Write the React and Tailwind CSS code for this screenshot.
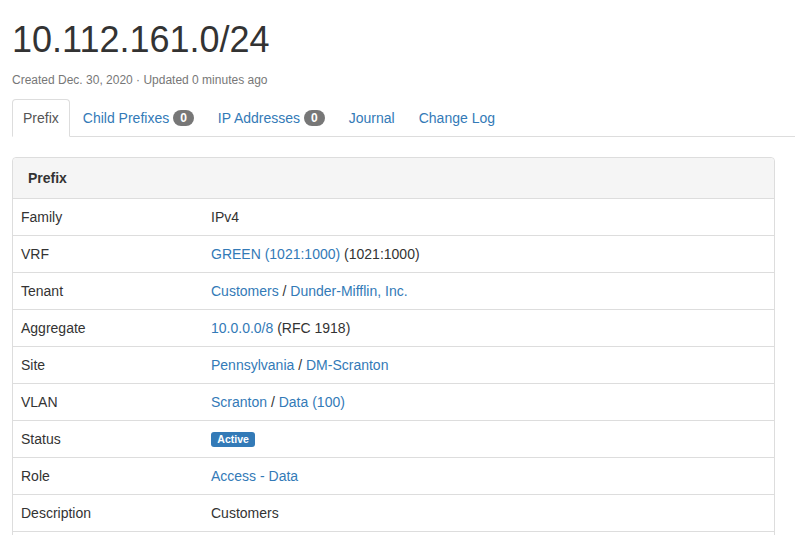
import React from "react";

const A = ({ children }) => <a className="text-[#337ab7] no-underline">{children}</a>;

const rows = [
  ["Family", <span>IPv4</span>],
  ["VRF", <span><A>GREEN (1021:1000)</A> (1021:1000)</span>],
  ["Tenant", <span><A>Customers</A> / <A>Dunder-Mifflin, Inc.</A></span>],
  ["Aggregate", <span><A>10.0.0.0/8</A> (RFC 1918)</span>],
  ["Site", <span><A>Pennsylvania</A> / <A>DM-Scranton</A></span>],
  ["VLAN", <span><A>Scranton</A> / <A>Data (100)</A></span>],
  [
    "Status",
    <span className="inline-block bg-[#337ab7] text-white font-bold text-[10.5px] leading-none pt-[2px] pb-[3px] px-[6.3px] rounded-[3px] align-[1px]">
      Active
    </span>,
  ],
  ["Role", <A>Access - Data</A>],
  ["Description", <span>Customers</span>],
  ["", <span>&nbsp;</span>],
];

const Badge = ({ n }) => (
  <span className="inline-block ml-1 bg-[#777] text-white font-bold text-[12px] leading-[12px] py-[2px] px-[7px] rounded-[10px] align-[1px]">
    {n}
  </span>
);

const tab = "block px-[10px] py-2 border border-transparent text-[#337ab7]";

export default function App() {
  return (
    <div className="pl-3 font-['Liberation_Sans',Arial,sans-serif] text-[14px] leading-5 text-[#333] bg-white h-[535px] overflow-hidden">
      <h1 className="mt-5 text-[36px] leading-[1.1] font-normal">10.112.161.0/24</h1>
      <div className="mt-[10px] text-[12px] leading-5 text-[#777]">
        Created Dec. 30, 2020 · Updated 0 minutes ago
      </div>
      <ul className="mt-[9px] flex border-b border-[#ddd]">
        <li className="-mb-px mr-[2px]">
          <a className="block px-[10px] py-2 border border-[#ddd] border-b-transparent rounded-t bg-white text-[#555]">
            Prefix
          </a>
        </li>
        <li className="-mb-px mr-[2px]">
          <a className={tab}>
            Child Prefixes<Badge n={0} />
          </a>
        </li>
        <li className="-mb-px mr-[2px]">
          <a className={tab}>
            IP Addresses<Badge n={0} />
          </a>
        </li>
        <li className="-mb-px mr-[2px]">
          <a className={tab}>Journal</a>
        </li>
        <li className="-mb-px mr-[2px]">
          <a className={tab}>Change Log</a>
        </li>
      </ul>
      <div className="mt-5 w-[763px] border border-[#ddd] rounded">
        <div className="bg-[#f5f5f5] border-b border-[#ddd] px-[15px] py-[10px] font-bold rounded-t">
          Prefix
        </div>
        {rows.map(([k, v], i) => (
          <div key={i} className={`flex ${i > 0 ? "border-t border-[#ddd]" : ""}`}>
            <div className="w-[190px] shrink-0 p-2">{k}</div>
            <div className="p-2">{v}</div>
          </div>
        ))}
      </div>
    </div>
  );
}
